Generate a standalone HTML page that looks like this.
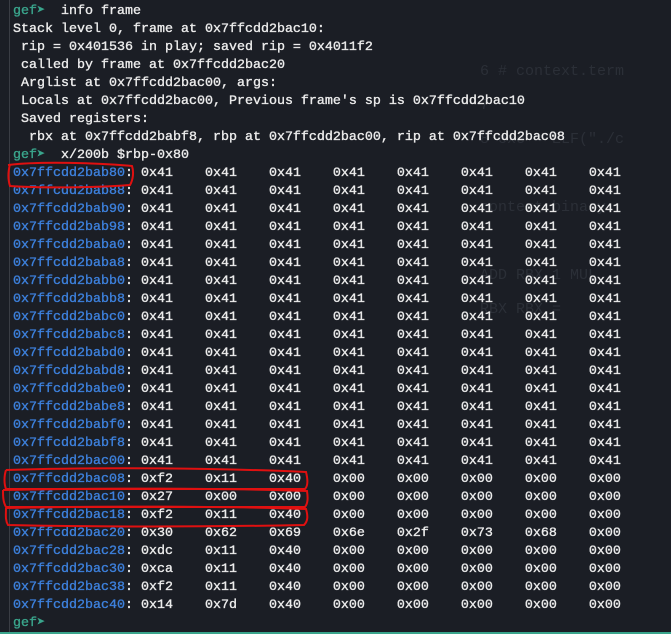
<!DOCTYPE html>
<html><head><style>
body{margin:0;width:671px;height:634px;background:#1b1e25;overflow:hidden;position:relative}
pre{position:absolute;left:13px;top:3px;margin:0;font-family:"Liberation Mono",monospace;font-size:13.33px;line-height:18px;color:#ececec;-webkit-text-stroke:0.35px currentColor}
.a{color:#3d80dc}.g{color:#3aa58c}
.vl{position:absolute;left:9px;top:0;width:1px;height:634px;background:#3a3d44}
.bt{position:absolute;left:0;bottom:0;width:671px;height:2px;background:#3aa58c}
.f{position:absolute;font-family:"Liberation Mono",monospace;font-size:15px;color:#2b2f37}
</style></head><body>
<div class="vl"></div>
<div class="f" style="left:480px;top:55px;line-height:34px">6  # context.term<br>7<br>8  exe = ELF("./c<br><br>   context.binary<br><br>   ADD RBX 1 MUL<br>       RBX RBX =</div>
<pre><span class="g">gef➤</span>  info frame
Stack level 0, frame at 0x7ffcdd2bac10:
 rip = 0x401536 in play; saved rip = 0x4011f2
 called by frame at 0x7ffcdd2bac20
 Arglist at 0x7ffcdd2bac00, args: 
 Locals at 0x7ffcdd2bac00, Previous frame's sp is 0x7ffcdd2bac10
 Saved registers:
  rbx at 0x7ffcdd2babf8, rbp at 0x7ffcdd2bac00, rip at 0x7ffcdd2bac08
<span class="g">gef➤</span>  x/200b $rbp-0x80
<span class="a">0x7ffcdd2bab80</span>: 0x41    0x41    0x41    0x41    0x41    0x41    0x41    0x41
<span class="a">0x7ffcdd2bab88</span>: 0x41    0x41    0x41    0x41    0x41    0x41    0x41    0x41
<span class="a">0x7ffcdd2bab90</span>: 0x41    0x41    0x41    0x41    0x41    0x41    0x41    0x41
<span class="a">0x7ffcdd2bab98</span>: 0x41    0x41    0x41    0x41    0x41    0x41    0x41    0x41
<span class="a">0x7ffcdd2baba0</span>: 0x41    0x41    0x41    0x41    0x41    0x41    0x41    0x41
<span class="a">0x7ffcdd2baba8</span>: 0x41    0x41    0x41    0x41    0x41    0x41    0x41    0x41
<span class="a">0x7ffcdd2babb0</span>: 0x41    0x41    0x41    0x41    0x41    0x41    0x41    0x41
<span class="a">0x7ffcdd2babb8</span>: 0x41    0x41    0x41    0x41    0x41    0x41    0x41    0x41
<span class="a">0x7ffcdd2babc0</span>: 0x41    0x41    0x41    0x41    0x41    0x41    0x41    0x41
<span class="a">0x7ffcdd2babc8</span>: 0x41    0x41    0x41    0x41    0x41    0x41    0x41    0x41
<span class="a">0x7ffcdd2babd0</span>: 0x41    0x41    0x41    0x41    0x41    0x41    0x41    0x41
<span class="a">0x7ffcdd2babd8</span>: 0x41    0x41    0x41    0x41    0x41    0x41    0x41    0x41
<span class="a">0x7ffcdd2babe0</span>: 0x41    0x41    0x41    0x41    0x41    0x41    0x41    0x41
<span class="a">0x7ffcdd2babe8</span>: 0x41    0x41    0x41    0x41    0x41    0x41    0x41    0x41
<span class="a">0x7ffcdd2babf0</span>: 0x41    0x41    0x41    0x41    0x41    0x41    0x41    0x41
<span class="a">0x7ffcdd2babf8</span>: 0x41    0x41    0x41    0x41    0x41    0x41    0x41    0x41
<span class="a">0x7ffcdd2bac00</span>: 0x41    0x41    0x41    0x41    0x41    0x41    0x41    0x41
<span class="a">0x7ffcdd2bac08</span>: 0xf2    0x11    0x40    0x00    0x00    0x00    0x00    0x00
<span class="a">0x7ffcdd2bac10</span>: 0x27    0x00    0x00    0x00    0x00    0x00    0x00    0x00
<span class="a">0x7ffcdd2bac18</span>: 0xf2    0x11    0x40    0x00    0x00    0x00    0x00    0x00
<span class="a">0x7ffcdd2bac20</span>: 0x30    0x62    0x69    0x6e    0x2f    0x73    0x68    0x00
<span class="a">0x7ffcdd2bac28</span>: 0xdc    0x11    0x40    0x00    0x00    0x00    0x00    0x00
<span class="a">0x7ffcdd2bac30</span>: 0xca    0x11    0x40    0x00    0x00    0x00    0x00    0x00
<span class="a">0x7ffcdd2bac38</span>: 0xf2    0x11    0x40    0x00    0x00    0x00    0x00    0x00
<span class="a">0x7ffcdd2bac40</span>: 0x14    0x7d    0x40    0x00    0x00    0x00    0x00    0x00
<span class="g">gef➤</span></pre>
<svg width="671" height="634" style="position:absolute;left:0;top:0" fill="none" stroke="#e01010" stroke-width="2">
<path d="M8 165 C40 161 100 163 132 166 C134 172 133 180 130 185 C95 188 40 188 10 186 C8 180 8 172 10 164"/>
<path d="M6 470 C100 467 220 468 306 472 C308 480 308 486 305 489 C200 489 100 489 6 489 C4 484 4 476 6 470"/>
<path d="M3 490 C100 488 220 488 307 491 C308 498 308 503 305 507 C200 507 100 507 6 507 C3 502 3 496 3 490"/>
<path d="M6 508 C100 506 220 506 306 509 C308 516 308 521 304 525 C200 527 100 527 8 525 C5 520 6 514 6 508"/>
</svg>
<div class="bt"></div>
</body></html>
